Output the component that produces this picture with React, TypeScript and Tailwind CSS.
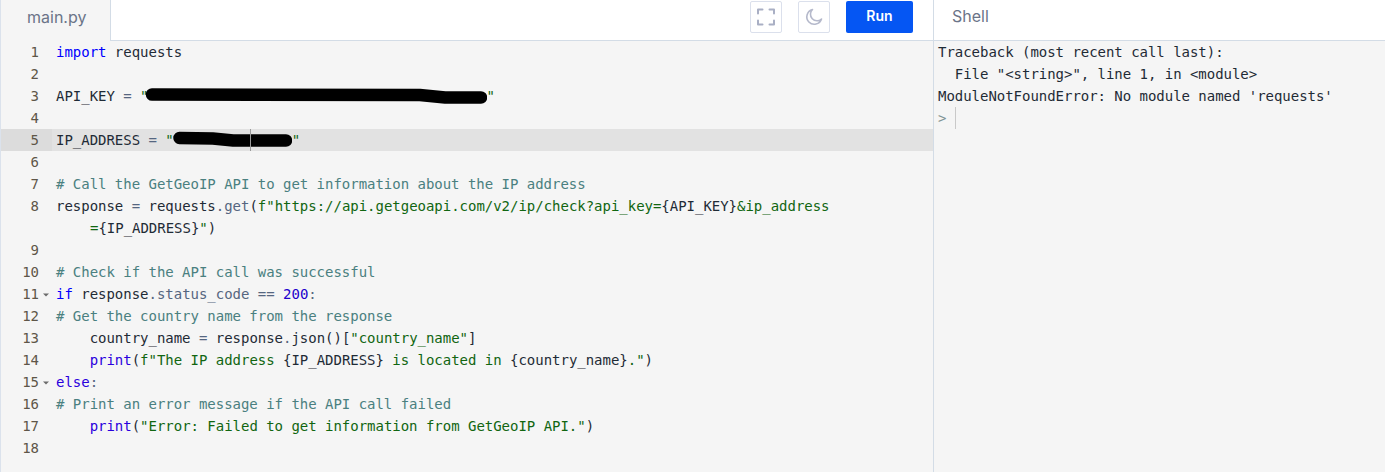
import React from "react";

type Tok = [string, string?];
const K = "text-[#0000ff]";
const B = "text-[#2a00dd]";
const C = "text-[#4a8080]";
const S = "text-[#116611]";
const O = "text-[#556680]";

type Line = { n: number; fold?: boolean; active?: boolean; toks?: Tok[]; wrap?: Tok[]; redact?: number };

const lines: Line[] = [
  { n: 1, toks: [["import", K], [" requests"]] },
  { n: 2 },
  { n: 3, toks: [["API_KEY "], ["=", O], [" "], ['"', S]], redact: 1 },
  { n: 4 },
  { n: 5, active: true, toks: [["IP_ADDRESS "], ["=", O], [" "], ['"', S]], redact: 2 },
  { n: 6 },
  { n: 7, toks: [["# Call the GetGeoIP API to get information about the IP address", C]] },
  {
    n: 8,
    toks: [
      ["response "],
      ["=", O],
      [" requests"],
      [".get", O],
      ["("],
      ['f"https://api.getgeoapi.com/v2/ip/check?api_key=', S],
      ["{API_KEY}"],
      ["&ip_address", S],
    ],
    wrap: [["=", S], ["{IP_ADDRESS}"], ['"', S], [")"]],
  },
  { n: 9 },
  { n: 10, toks: [["# Check if the API call was successful", C]] },
  { n: 11, fold: true, toks: [["if", K], [" response"], [".status_code", O], [" "], ["==", O], [" "], ["200", "text-[#2200cc]"], [":", O]] },
  { n: 12, toks: [["# Get the country name from the response", C]] },
  { n: 13, toks: [["    country_name "], ["=", O], [" response"], [".", O], ["json()["], ['"country_name"', S], ["]"]] },
  {
    n: 14,
    toks: [
      ["    "],
      ["print", B],
      ["("],
      ['f"The IP address ', S],
      ["{IP_ADDRESS}"],
      [" is located in ", S],
      ["{country_name}"],
      ['."', S],
      [")"],
    ],
  },
  { n: 15, fold: true, toks: [["else", B], [":", O]] },
  { n: 16, toks: [["# Print an error message if the API call failed", C]] },
  { n: 17, toks: [["    "], ["print", B], ["("], ['"Error: Failed to get information from GetGeoIP API."', S], [")"]] },
  { n: 18 },
];

function Toks({ toks }: { toks?: Tok[] }) {
  return (
    <>
      {toks?.map((t, i) => (
        <span key={i} className={t[1]}>
          {t[0]}
        </span>
      ))}
    </>
  );
}

function Row({ line }: { line: Line }) {
  return (
    <div className={`flex ${line.active ? "bg-[#e2e2e2]" : ""}`}>
      <div className="w-[51px] shrink-0 flex">
        <span className={`w-[38px] text-right text-[#5e5648] ${line.active ? "bg-[#dcdcdc]" : ""}`}>{line.n}</span>
        <span className={`flex-1 flex items-center justify-center pl-[1px] ${line.active ? "bg-[#dcdcdc]" : ""}`}>
          {line.fold && (
            <svg width="6" height="4" viewBox="0 0 6 4" className="mt-[1px]">
              <path d="M0 0.5H6L3 3.5Z" fill="#6b6b6b" />
            </svg>
          )}
        </span>
      </div>
      <div className="pl-[4px] whitespace-pre text-[#1f2b36]">
        <div className="flex items-center h-[22px]">
          <Toks toks={line.toks} />
          {line.redact === 1 && (
            <>
              <svg width="342" height="22" viewBox="0 0 342 22" className="shrink-0 -ml-[4px]">
                <path d="M7 9.5 L275 10 L300 12.5 L336 12.5" stroke="#000" strokeWidth="12.5" strokeLinecap="round" fill="none" />
              </svg>
              <span className={S}>"</span>
            </>
          )}
          {line.redact === 2 && (
            <>
              <svg width="119" height="22" viewBox="0 0 119 22" className="shrink-0 -ml-[1px]">
                <path d="M6.5 9 L40 9.5 L60 11.5 L113 11.5" stroke="#000" strokeWidth="12.5" strokeLinecap="round" fill="none" />
                <path d="M77.5 0 V22" stroke="#9a9a9a" strokeWidth="1" />
              </svg>
              <span className={S}>"</span>
            </>
          )}
        </div>
        {line.wrap && (
          <div className="h-[22px] pl-[34px]">
            <Toks toks={line.wrap} />
          </div>
        )}
      </div>
    </div>
  );
}

export default function App() {
  return (
    <div className="w-[1385px] h-[472px] overflow-hidden flex flex-col bg-white font-['Inter',sans-serif] border-l border-l-[#dbe2ec]">
      <div className="h-[41px] shrink-0 flex border-b border-[#d3dce6]">
        <div className="w-[932px] shrink-0 flex items-stretch">
          <div className="w-[110px] -mb-[1px] h-[41px] bg-[#f5f5f5] border-r border-[#d3dce6] flex items-center pl-[26px] pb-[8px] text-[16px] text-[#6b7488] font-['Inter',sans-serif]">
            main.py
          </div>
          <div className="flex-1 flex items-start justify-end pt-[1px] pr-[20px]">
            <button className="w-[32px] h-[32px] rounded-[2px] border border-[#dbe0ec] flex items-center justify-center mr-[16px]">
              <svg width="18" height="18" viewBox="0 0 18 18" fill="none" stroke="#a9afc4" strokeWidth="2">
                <path d="M1 5.5V1.5H5.5M12.5 1.5H17V5.5M17 12.5V16.5H12.5M5.5 16.5H1V12.5" strokeLinecap="round" strokeLinejoin="round" />
              </svg>
            </button>
            <button className="w-[32px] h-[32px] rounded-[2px] border border-[#dbe0ec] flex items-center justify-center mr-[16px]">
              <svg width="18" height="18" viewBox="0 0 18 18" fill="none" stroke="#b5b9cb" strokeWidth="1.6">
                <path d="M7.5 1.5A7.5 7.5 0 1 0 16.5 11A6.5 6.5 0 0 1 7.5 1.5Z" strokeLinejoin="round" />
              </svg>
            </button>
            <button className="w-[67px] h-[32px] rounded-[2px] bg-[#0556f3] text-white text-[14px] font-semibold font-['Inter',sans-serif] pb-[3px]">
              Run
            </button>
          </div>
        </div>
        <div className="flex-1 border-l border-[#d3dce6] flex items-center pl-[18px] pb-[8px] text-[16px] text-[#6b7488] font-['Inter',sans-serif]">
          Shell
        </div>
      </div>
      <div className="flex-1 flex min-h-0">
        <div className="w-[932px] shrink-0 bg-[#f5f5f5] font-['DejaVu_Sans_Mono',monospace] text-[14px] leading-[22px] tracking-[-0.022px]">
          {lines.map((l) => (
            <Row key={l.n} line={l} />
          ))}
        </div>
        <div className="flex-1 bg-[#f5f5f5] border-l border-[#d3dce6] pl-[4px] font-['DejaVu_Sans_Mono',monospace] text-[14px] leading-[22px] tracking-[-0.03px] text-[#1f2b36] whitespace-pre">
          <div>Traceback (most recent call last):</div>
          <div>  File "&lt;string&gt;", line 1, in &lt;module&gt;</div>
          <div>ModuleNotFoundError: No module named 'requests'</div>
          <div className="flex items-center">
            <span className="text-[#7f9494]">&gt;</span>
            <span className="ml-[9px] w-[1px] h-[22px] bg-[#c9c9c9]" />
          </div>
        </div>
      </div>
    </div>
  );
}
